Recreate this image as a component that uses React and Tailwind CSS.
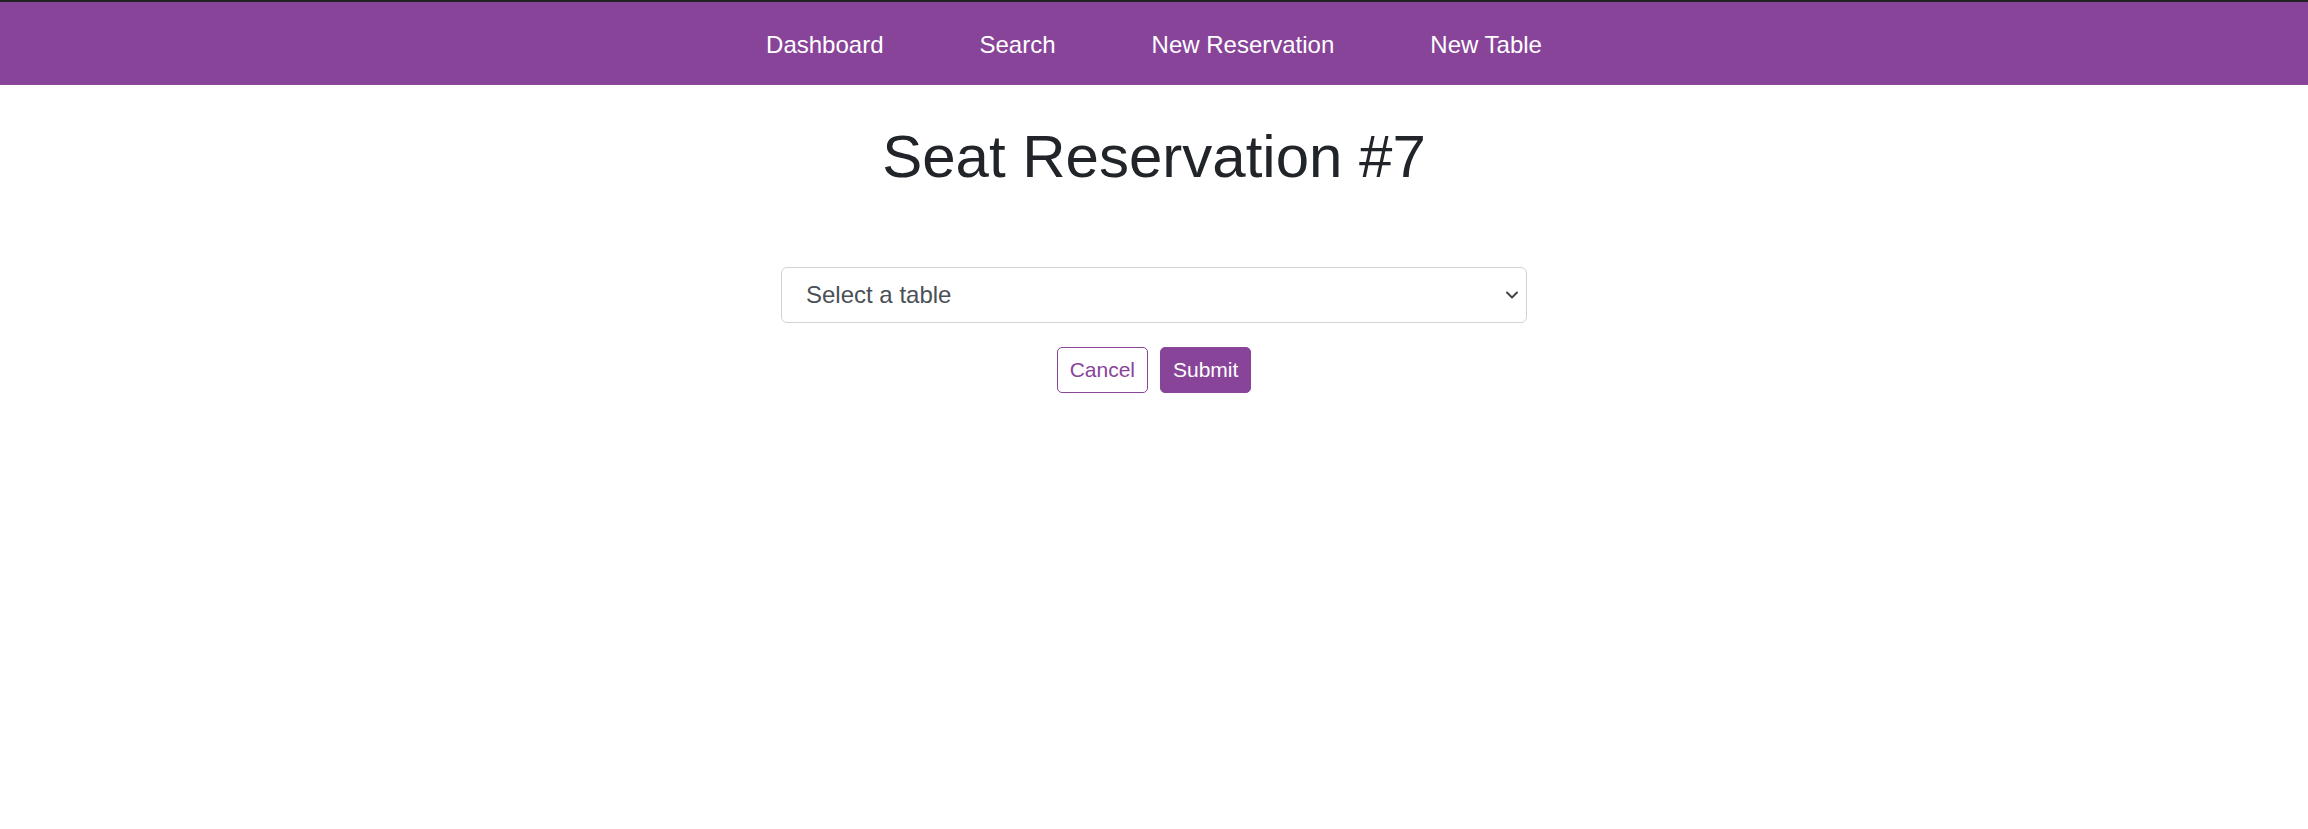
import { useState } from 'react';

const links = ['Dashboard', 'Search', 'New Reservation', 'New Table'];

export default function App() {
    const [tableId, setTableId] = useState('');

    return (
        <div className="min-h-screen bg-white font-['Liberation_Sans',Arial,sans-serif] text-[#212529]">
            {/* Top menu */}
            <nav className="h-[85px] border-t-2 border-[#222] bg-[#884499] flex items-center justify-center gap-[96px] pt-[2px]">
                {links.map((label) => (
                    <a key={label} href="#" className="text-[24px] leading-[36px] text-white">
                        {label}
                    </a>
                ))}
            </nav>

            <main className="flex flex-col items-center">
                <h1 className="mt-[36px] text-[60px] leading-[72px] font-normal">Seat Reservation #7</h1>

                <form className="mt-[74px] flex flex-col items-center" onSubmit={(e) => e.preventDefault()}>
                    <div className="relative w-[746px]">
                        <select
                            value={tableId}
                            onChange={(e) => setTableId(e.target.value)}
                            className="w-full h-[56px] appearance-none rounded-[6px] border border-[#ced4da] bg-white pl-[24px] pr-[48px] text-[24px] text-[#495057] outline-none"
                        >
                            <option value="">Select a table</option>
                            <option value="1">Bar #1 - 1</option>
                            <option value="2">Table #1 - 6</option>
                        </select>
                        <svg
                            className="pointer-events-none absolute right-[8px] top-1/2 -translate-y-1/2"
                            width="14"
                            height="9"
                            viewBox="0 0 14 9"
                            fill="none"
                        >
                            <path d="M2 2l5 5 5-5" stroke="#444" strokeWidth="2" strokeLinecap="round" strokeLinejoin="round" />
                        </svg>
                    </div>

                    <div className="mt-[24px] flex gap-[12px]">
                        <button
                            type="button"
                            className="h-[46px] px-[12px] rounded-[5px] border border-[#884499] bg-white text-[21px] text-[#884499]"
                        >
                            Cancel
                        </button>
                        <button
                            type="submit"
                            className="h-[46px] px-[12px] rounded-[5px] border border-[#884499] bg-[#884499] text-[21px] text-white"
                        >
                            Submit
                        </button>
                    </div>
                </form>
            </main>
        </div>
    );
}
